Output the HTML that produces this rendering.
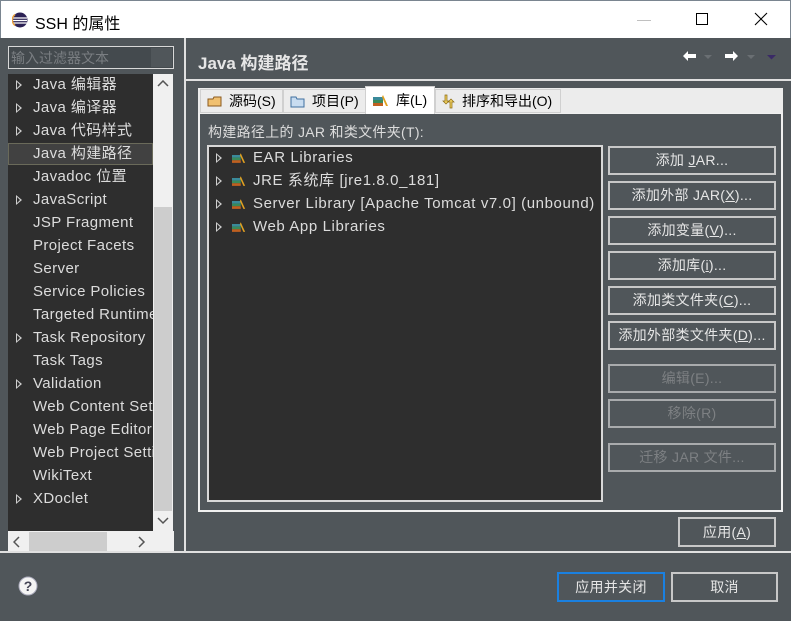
<!DOCTYPE html>
<html><head><meta charset="utf-8"><style>
*{margin:0;padding:0;box-sizing:border-box}
body{width:791px;height:621px;overflow:hidden;background:#50565a;font-family:"Liberation Sans","Noto Sans CJK SC",sans-serif;font-size:14px;color:#dcdcdc;position:relative}
.a{position:absolute}
.title{left:0;top:0;width:791px;height:38px;background:#fff;color:#000;border:1px solid #7a8590;border-bottom:none}
.btn{position:absolute;left:608px;width:168px;height:29px;border:2px solid #c8c8c8;background:#50565a;color:#e6e6e6;text-align:center;line-height:25px;font-size:14px;letter-spacing:.3px}
.dis{color:#7d8083;border-color:#a9abad}
.li{position:absolute;left:33px;font-size:15px;line-height:20px;color:#dcdcdc;white-space:nowrap;letter-spacing:.4px}
.tri{position:absolute;left:16px;width:0;height:0;border-top:5px solid transparent;border-bottom:5px solid transparent;border-left:6px solid #cfcfcf}
.tri::after{content:"";position:absolute;left:-5px;top:-3px;border-top:3px solid transparent;border-bottom:3px solid transparent;border-left:3px solid #2e2e2e}
.tab{position:absolute;top:89px;height:24px;background:#ececec;border:1px solid #d0d0d0;color:#000;font-size:14px;line-height:22px;padding-left:6px}
.lib{position:absolute;left:232px;width:14px;height:11px}
.tl{position:absolute;left:253px;font-size:15px;line-height:20px;color:#dcdcdc;white-space:nowrap;letter-spacing:.6px}
</style></head><body>
<div class="a title">
 <svg class="a" style="left:11px;top:11px" width="16" height="16"><circle cx="8" cy="8" r="7.5" fill="#2c2255"/><path d="M1 6h14M1 8.5h14M1 11h14" stroke="#fff" stroke-width="1.2"/><path d="M3 2.5a7 7 0 0 0 0 11" stroke="#e8a040" stroke-width="1.5" fill="none"/></svg>
 <div class="a" style="left:34px;top:9px;font-size:16px">SSH 的属性</div>
 <div class="a" style="left:636px;top:19px;width:14px;height:1px;background:#c0c0c0"></div>
 <div class="a" style="left:695px;top:12px;width:12px;height:12px;border:1px solid #000"></div>
 <svg class="a" style="left:753px;top:11px" width="14" height="14"><path d="M1 1L13 13M13 1L1 13" stroke="#000" stroke-width="1.1"/></svg>
</div>
<!-- left -->
<div class="a" style="left:8px;top:46px;width:166px;height:23px;border:1px solid #d8d8d8;background:#444a4e;color:#7a7e82;font-size:14px;padding:1px 2px">输入过滤器文本</div>
<div class="a" style="left:151px;top:48px;width:21px;height:19px;background:#50565a"></div>
<div class="a" style="left:8px;top:74px;width:145px;height:457px;background:#2e2e2e"></div>
<div class="a" style="left:153px;top:74px;width:20px;height:457px;background:#f0f0f0"></div>
<div class="a" style="left:154px;top:207px;width:18px;height:304px;background:#cdcdcd"></div>
<svg class="a" style="left:157px;top:80px" width="12" height="8"><path d="M1 6L6 1L11 6" stroke="#555" stroke-width="1.5" fill="none"/></svg>
<svg class="a" style="left:157px;top:517px" width="12" height="8"><path d="M1 1L6 6L11 1" stroke="#555" stroke-width="1.5" fill="none"/></svg>
<div class="a" style="left:8px;top:531px;width:166px;height:21px;background:#f0f0f0"></div>
<div class="a" style="left:29px;top:532px;width:78px;height:19px;background:#cdcdcd"></div>
<svg class="a" style="left:13px;top:536px" width="8" height="12"><path d="M6 1L1 6L6 11" stroke="#555" stroke-width="1.5" fill="none"/></svg>
<svg class="a" style="left:138px;top:536px" width="8" height="12"><path d="M1 1L6 6L1 11" stroke="#555" stroke-width="1.5" fill="none"/></svg>
<div class="a" style="left:8px;top:143px;width:145px;height:22px;background:#414141;border:1px solid #6a6a5a"></div>
<div class="a" style="left:8px;top:74px;width:145px;height:457px;overflow:hidden">
<div style="position:relative;left:-8px;top:-74px">
<div class="tri" style="top:80px"></div><div class="li" style="top:75px">Java 编辑器</div>
<div class="tri" style="top:103px"></div><div class="li" style="top:98px">Java 编译器</div>
<div class="tri" style="top:126px"></div><div class="li" style="top:121px">Java 代码样式</div>
<div class="li" style="top:144px">Java 构建路径</div>
<div class="li" style="top:167px">Javadoc 位置</div>
<div class="tri" style="top:195px"></div><div class="li" style="top:190px">JavaScript</div>
<div class="li" style="top:213px">JSP Fragment</div>
<div class="li" style="top:236px">Project Facets</div>
<div class="li" style="top:259px">Server</div>
<div class="li" style="top:282px">Service Policies</div>
<div class="li" style="top:305px">Targeted Runtimes</div>
<div class="tri" style="top:333px"></div><div class="li" style="top:328px">Task Repository</div>
<div class="li" style="top:351px">Task Tags</div>
<div class="tri" style="top:379px"></div><div class="li" style="top:374px">Validation</div>
<div class="li" style="top:397px">Web Content Settings</div>
<div class="li" style="top:420px">Web Page Editor</div>
<div class="li" style="top:443px">Web Project Settings</div>
<div class="li" style="top:466px">WikiText</div>
<div class="tri" style="top:494px"></div><div class="li" style="top:489px">XDoclet</div>
</div></div>
<!-- divider -->
<div class="a" style="left:184px;top:38px;width:2px;height:514px;background:#e0e0e0"></div>
<div class="a" style="left:0px;top:551px;width:791px;height:2px;background:#e0e0e0"></div>
<!-- right header -->
<div class="a" style="left:198px;top:49px;font-size:17px;font-weight:bold;color:#e6e6e6">Java 构建路径</div>
<div class="a" style="left:186px;top:79px;width:605px;height:2px;background:#e0e0e0"></div>
<svg class="a" style="left:682px;top:50px" width="100" height="14"><path d="M1 6L6 1V4H14V8H6V11Z" fill="#fff"/><path d="M22 5h8l-4 4z" fill="#6a6f73"/><path d="M56 6L51 1V4H43V8H51V11Z" fill="#fff"/><path d="M65 5h8l-4 4z" fill="#6a6f73"/><path d="M85 5h9l-4.5 4.5z" fill="#3a2a66"/></svg>
<!-- tab panel -->
<div class="a" style="left:198px;top:112px;width:585px;height:400px;border:2px solid #f0f0f0;background:#50565a"></div>
<div class="a" style="left:198px;top:88px;width:585px;height:25px;background:#ececec"></div>
<div class="tab" style="left:200px;width:83px">
<svg style="position:absolute;left:6px;top:5px" width="16" height="13"><path d="M1 4h5l1-2h7v9H1z" fill="#f0c070" stroke="#8a5a20"/></svg><span style="margin-left:22px">源码(S)</span></div>
<div class="tab" style="left:283px;width:83px">
<svg style="position:absolute;left:6px;top:5px" width="16" height="13"><path d="M1 2h5l1 2h7v8H1z" fill="#c8dcf0" stroke="#4070a0"/></svg><span style="margin-left:22px">项目(P)</span></div>
<div class="a" style="left:365px;top:86px;width:70px;height:28px;background:#fff;border:1px solid #d0d0d0;border-bottom:none;color:#000;line-height:26px;padding-left:30px">库(L)
<svg style="position:absolute;left:7px;top:8px" width="16" height="12"><rect x="0" y="2" width="10" height="3" fill="#3a8a9a"/><rect x="0" y="5" width="10" height="3" fill="#3a8a5a"/><rect x="0" y="8" width="10" height="3" fill="#c06020"/><path d="M10 0l5 11h-2l-4-9z" fill="#e0a020"/></svg></div>
<div class="tab" style="left:435px;width:126px">
<svg style="position:absolute;left:5px;top:4px" width="16" height="15"><path d="M4 1v6H2l3 3 3-3H6V1z" fill="#f0d060" stroke="#8a6a10" stroke-width=".7"/><path d="M11 14V8h2l-3-3-3 3h2v6z" fill="#f0d060" stroke="#8a6a10" stroke-width=".7"/></svg><span style="margin-left:20px">排序和导出(O)</span></div>
<div class="a" style="left:208px;top:122px;font-size:14px;color:#dcdcdc;letter-spacing:.3px">构建路径上的 JAR 和类文件夹(T):</div>
<div class="a" style="left:207px;top:145px;width:396px;height:357px;background:#2e2e2e;border:2px solid #d8d8d8"></div>
<div class="tri" style="left:216px;top:153px"></div><svg class="lib" style="top:153px" viewBox="0 0 16 12"><rect x="0" y="2" width="10" height="3" fill="#3a8a9a"/><rect x="0" y="5" width="10" height="3" fill="#3a8a5a"/><rect x="0" y="8" width="10" height="3" fill="#c06020"/><path d="M10 0l5 11h-2l-4-9z" fill="#e0a020"/></svg><div class="tl" style="top:148px">EAR Libraries</div>
<div class="tri" style="left:216px;top:176px"></div><svg class="lib" style="top:176px" viewBox="0 0 16 12"><rect x="0" y="2" width="10" height="3" fill="#3a8a9a"/><rect x="0" y="5" width="10" height="3" fill="#3a8a5a"/><rect x="0" y="8" width="10" height="3" fill="#c06020"/><path d="M10 0l5 11h-2l-4-9z" fill="#e0a020"/></svg><div class="tl" style="top:171px">JRE 系统库 [jre1.8.0_181]</div>
<div class="tri" style="left:216px;top:199px"></div><svg class="lib" style="top:199px" viewBox="0 0 16 12"><rect x="0" y="2" width="10" height="3" fill="#3a8a9a"/><rect x="0" y="5" width="10" height="3" fill="#3a8a5a"/><rect x="0" y="8" width="10" height="3" fill="#c06020"/><path d="M10 0l5 11h-2l-4-9z" fill="#e0a020"/></svg><div class="tl" style="top:194px">Server Library [Apache Tomcat v7.0] (unbound)</div>
<div class="tri" style="left:216px;top:222px"></div><svg class="lib" style="top:222px" viewBox="0 0 16 12"><rect x="0" y="2" width="10" height="3" fill="#3a8a9a"/><rect x="0" y="5" width="10" height="3" fill="#3a8a5a"/><rect x="0" y="8" width="10" height="3" fill="#c06020"/><path d="M10 0l5 11h-2l-4-9z" fill="#e0a020"/></svg><div class="tl" style="top:217px">Web App Libraries</div>
<div class="btn" style="top:146px">添加 <u>J</u>AR...</div>
<div class="btn" style="top:181px">添加外部 JAR(<u>X</u>)...</div>
<div class="btn" style="top:216px">添加变量(<u>V</u>)...</div>
<div class="btn" style="top:251px">添加库(<u>i</u>)...</div>
<div class="btn" style="top:286px">添加类文件夹(<u>C</u>)...</div>
<div class="btn" style="top:321px">添加外部类文件夹(<u>D</u>)...</div>
<div class="btn dis" style="top:364px">编辑(E)...</div>
<div class="btn dis" style="top:399px">移除(R)</div>
<div class="btn dis" style="top:443px">迁移 JAR 文件...</div>
<div class="btn" style="left:678px;top:517px;width:98px;height:30px;line-height:26px">应用(<u>A</u>)</div>
<!-- bottom -->
<svg class="a" style="left:18px;top:576px" width="20" height="20"><circle cx="10" cy="10" r="9" fill="#f4f4f4" stroke="#aab" stroke-width="1"/><text x="10" y="15" text-anchor="middle" font-family="Liberation Sans" font-weight="bold" font-size="14" fill="#445">?</text></svg>
<div class="btn" style="left:557px;top:572px;width:108px;height:30px;line-height:26px;border-color:#1a80e0">应用并关闭</div>
<div class="btn" style="left:671px;top:572px;width:107px;height:30px;line-height:26px">取消</div>
</body></html>
